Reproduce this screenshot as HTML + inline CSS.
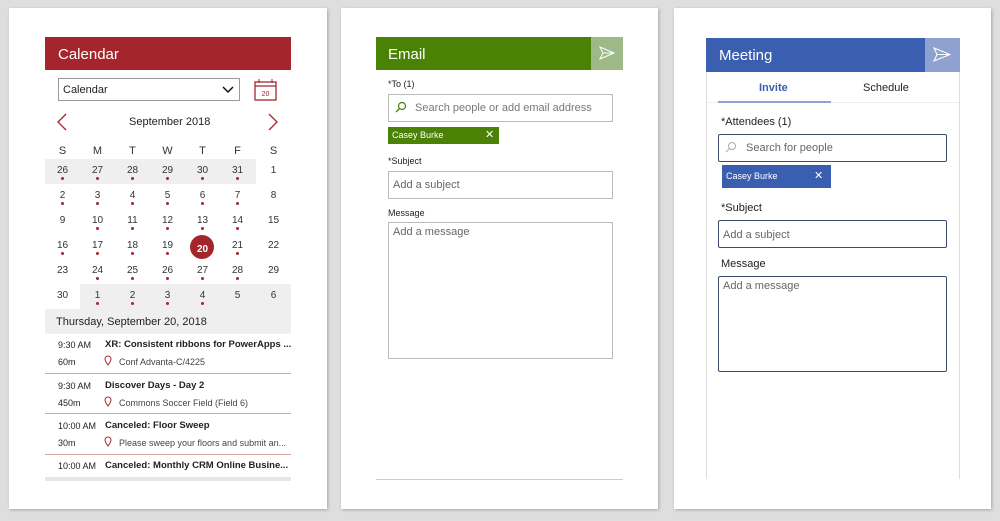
<!DOCTYPE html>
<html><head><style>
*{margin:0;padding:0;box-sizing:border-box}
body{width:1000px;height:521px;background:#dedede;font-family:"Liberation Sans",sans-serif;position:relative;overflow:hidden;color:#222}
.a{position:absolute}
.card{position:absolute;background:#fff;top:8px;height:501px;box-shadow:1px 1px 3px rgba(0,0,0,.25)}
.t{position:absolute;white-space:nowrap}
.dn{position:absolute;width:35px;text-align:center;font-size:10px;color:#333}
.dot{position:absolute;width:3px;height:3px;border-radius:50%;background:#a4262c}
.ev{position:absolute;left:105px;width:186px;overflow:hidden;white-space:nowrap;font-size:9.5px;font-weight:bold}
</style></head><body>
<div class="card" style="left:9px;width:318px"></div>
<div class="card" style="left:341px;width:317px"></div>
<div class="card" style="left:674px;width:317px"></div>

<!-- Calendar -->
<div class="a" style="left:45px;top:37px;width:246px;height:33px;background:#a4262c"></div>
<div class="t" style="left:58px;top:46px;color:#fff;font-size:15px">Calendar</div>
<div class="a" style="left:58px;top:78px;width:182px;height:23px;border:1px solid #999"></div>
<div class="t" style="left:63px;top:84px;font-size:11px">Calendar</div>
<svg class="a" style="left:222px;top:85px" width="12" height="10"><path d="M1 2l5 5 5-5" stroke="#111" stroke-width="1.5" fill="none"/></svg>
<svg class="a" style="left:254px;top:78px" width="24" height="24"><rect x="1" y="4" width="21" height="18" fill="none" stroke="#a4262c" stroke-width="1.3"/><line x1="1" y1="8" x2="22" y2="8" stroke="#a4262c" stroke-width="1.3"/><line x1="5" y1="1" x2="5" y2="5" stroke="#a4262c"/><line x1="18" y1="1" x2="18" y2="5" stroke="#a4262c"/><text x="11.5" y="18" font-size="7" text-anchor="middle" fill="#a4262c" font-family="Liberation Sans">20</text></svg>
<svg class="a" style="left:56px;top:113px" width="12" height="18"><path d="M10 1L2 9l8 8" stroke="#a4262c" stroke-width="1.3" fill="none"/></svg>
<svg class="a" style="left:267px;top:113px" width="12" height="18"><path d="M2 1l8 8-8 8" stroke="#a4262c" stroke-width="1.3" fill="none"/></svg>
<div class="t" style="left:129px;top:116px;font-size:11px">September 2018</div>
<div class="a" style="left:45px;top:159px;width:211px;height:25px;background:#efefef"></div>
<div class="a" style="left:80px;top:284px;width:211px;height:25px;background:#efefef"></div>
<div class="a" style="left:45px;top:309px;width:246px;height:25px;background:#efefef"></div>
<div class="t" style="left:56px;top:316px;font-size:11px">Thursday, September 20, 2018</div>
<div class="a" style="left:190px;top:235px;width:24px;height:24px;border-radius:50%;background:#a4262c"></div>
<div id="cal"></div>

<div class="t" style="left:58px;top:340px;font-size:9px">9:30 AM</div>
<div class="ev" style="top:339px">XR: Consistent ribbons for PowerApps ...</div>
<div class="t" style="left:58px;top:357px;font-size:9px">60m</div>
<div class="t" style="left:119px;top:357px;font-size:9px;color:#444">Conf Advanta-C/4225</div>
<div class="a" style="left:45px;top:373px;width:246px;height:1px;background:#d7a7a9"></div>
<div class="t" style="left:58px;top:381px;font-size:9px">9:30 AM</div>
<div class="ev" style="top:380px">Discover Days - Day 2</div>
<div class="t" style="left:58px;top:398px;font-size:9px">450m</div>
<div class="t" style="left:119px;top:398px;font-size:9px;color:#444">Commons Soccer Field (Field 6)</div>
<div class="a" style="left:45px;top:413px;width:246px;height:1px;background:#d7a7a9"></div>
<div class="t" style="left:58px;top:421px;font-size:9px">10:00 AM</div>
<div class="ev" style="top:420px">Canceled: Floor Sweep</div>
<div class="t" style="left:58px;top:438px;font-size:9px">30m</div>
<div class="t" style="left:119px;top:438px;font-size:9px;color:#444">Please sweep your floors and submit an...</div>
<div class="a" style="left:45px;top:454px;width:246px;height:1px;background:#d7a7a9"></div>
<div class="t" style="left:58px;top:461px;font-size:9px">10:00 AM</div>
<div class="ev" style="top:460px">Canceled: Monthly CRM Online Busine...</div>
<div class="a" style="left:45px;top:477px;width:246px;height:4px;background:#e6e6e6"></div>
<svg class="a" style="left:104px;top:355px" width="8" height="11"><path d="M4 10C1 6 1 4 1 4a3 3 0 016 0s0 2-3 6z" fill="none" stroke="#a4262c"/></svg>
<svg class="a" style="left:104px;top:396px" width="8" height="11"><path d="M4 10C1 6 1 4 1 4a3 3 0 016 0s0 2-3 6z" fill="none" stroke="#a4262c"/></svg>
<svg class="a" style="left:104px;top:436px" width="8" height="11"><path d="M4 10C1 6 1 4 1 4a3 3 0 016 0s0 2-3 6z" fill="none" stroke="#a4262c"/></svg>

<!-- Email -->
<div class="a" style="left:376px;top:37px;width:215px;height:33px;background:#498205"></div>
<div class="a" style="left:591px;top:37px;width:32px;height:33px;background:#9cb987"></div>
<svg class="a" style="left:599px;top:46px" width="16" height="14"><path d="M1 1l14 6-14 6 3-6z M4 7h11" fill="none" stroke="#fff" stroke-width="1"/></svg>
<div class="t" style="left:388px;top:46px;color:#fff;font-size:15px">Email</div>
<div class="t" style="left:388px;top:79px;font-size:9px">*To (1)</div>
<div class="a" style="left:388px;top:94px;width:225px;height:28px;border:1px solid #bbb"></div>
<svg class="a" style="left:395px;top:101px" width="12" height="12"><circle cx="7" cy="5" r="3.5" fill="none" stroke="#498205" stroke-width="1.2"/><path d="M4.5 7.5L1 11" stroke="#498205" stroke-width="1.3"/></svg>
<div class="t" style="left:415px;top:102px;font-size:11px;color:#777">Search people or add email address</div>
<div class="a" style="left:388px;top:127px;width:111px;height:17px;background:#498205"></div>
<div class="t" style="left:392px;top:130px;font-size:9px;color:#fff">Casey Burke</div>
<div class="t" style="left:485px;top:128px;font-size:11px;color:#fff">✕</div>
<div class="t" style="left:388px;top:156px;font-size:9px">*Subject</div>
<div class="a" style="left:388px;top:171px;width:225px;height:28px;border:1px solid #bbb"></div>
<div class="t" style="left:393px;top:179px;font-size:11px;color:#666">Add a subject</div>
<div class="t" style="left:388px;top:208px;font-size:9px">Message</div>
<div class="a" style="left:388px;top:222px;width:225px;height:137px;border:1px solid #bbb"></div>
<div class="t" style="left:393px;top:226px;font-size:11px;color:#666">Add a message</div>
<div class="a" style="left:376px;top:479px;width:247px;height:1px;background:#ccc"></div>

<!-- Meeting -->
<div class="a" style="left:706px;top:38px;width:1px;height:441px;background:#ddd"></div>
<div class="a" style="left:959px;top:38px;width:1px;height:441px;background:#ddd"></div>
<div class="a" style="left:706px;top:38px;width:219px;height:34px;background:#3a5fb1"></div>
<div class="a" style="left:925px;top:38px;width:35px;height:34px;background:#8ea1d1"></div>
<svg class="a" style="left:933px;top:47px" width="18" height="15"><path d="M1 1l16 6.5L1 14l3-6.5z M4 7.5h13" fill="none" stroke="#fff" stroke-width="1.1"/></svg>
<div class="t" style="left:719px;top:47px;color:#fff;font-size:15px">Meeting</div>
<div class="t" style="left:759px;top:82px;font-size:11px;font-weight:bold;color:#3a5fb1">Invite</div>
<div class="t" style="left:863px;top:82px;font-size:11px">Schedule</div>
<div class="a" style="left:707px;top:102px;width:252px;height:1px;background:#eee"></div>
<div class="a" style="left:718px;top:101px;width:113px;height:2px;background:#8ea1d1"></div>
<div class="t" style="left:721px;top:116px;font-size:11px">*Attendees (1)</div>
<div class="a" style="left:718px;top:134px;width:229px;height:28px;border:1px solid #3c4a6b;border-radius:2px"></div>
<svg class="a" style="left:725px;top:141px" width="12" height="12"><circle cx="7" cy="5" r="3.5" fill="none" stroke="#aaa"/><path d="M4.5 7.5L1 11" stroke="#aaa"/></svg>
<div class="t" style="left:746px;top:142px;font-size:11px;color:#666">Search for people</div>
<div class="a" style="left:722px;top:165px;width:109px;height:23px;background:#3a5fb1"></div>
<div class="t" style="left:726px;top:171px;font-size:9px;color:#fff">Casey Burke</div>
<div class="t" style="left:814px;top:169px;font-size:11px;color:#fff">✕</div>
<div class="t" style="left:721px;top:202px;font-size:11px">*Subject</div>
<div class="a" style="left:718px;top:220px;width:229px;height:28px;border:1px solid #3c4a6b;border-radius:2px"></div>
<div class="t" style="left:723px;top:229px;font-size:11px;color:#666">Add a subject</div>
<div class="t" style="left:721px;top:258px;font-size:11px">Message</div>
<div class="a" style="left:718px;top:276px;width:229px;height:96px;border:1px solid #3c4a6b;border-radius:2px"></div>
<div class="t" style="left:723px;top:280px;font-size:11px;color:#666">Add a message</div>

<script>
var c=document.getElementById('cal'),h='',xs=[45,80,115,150,185,220,256],dn=['S','M','T','W','T','F','S'];
for(var i=0;i<7;i++)h+='<div class="dn" style="left:'+xs[i]+'px;top:145px;font-size:11px">'+dn[i]+'</div>';
var rows=[[26,27,28,29,30,31,1],[2,3,4,5,6,7,8],[9,10,11,12,13,14,15],[16,17,18,19,20,21,22],[23,24,25,26,27,28,29],[30,1,2,3,4,5,6]];
var nodot=[[0,0,0,0,0,0,1],[0,0,0,0,0,0,1],[1,0,0,0,0,0,1],[0,0,0,0,0,0,1],[1,0,0,0,0,0,1],[1,0,0,0,0,1,1]];
for(var r=0;r<6;r++)for(var i=0;i<7;i++){var y=165+r*25;var sel=(r==3&&i==4);
h+='<div class="dn" style="left:'+xs[i]+'px;top:'+(sel?y+4:y)+'px;'+(sel?'color:#fff;font-weight:bold':'')+'">'+rows[r][i]+'</div>';
if(!nodot[r][i]&&!sel)h+='<div class="dot" style="left:'+(xs[i]+16)+'px;top:'+(y+12)+'px"></div>';}
c.innerHTML=h;
</script>
</body></html>
